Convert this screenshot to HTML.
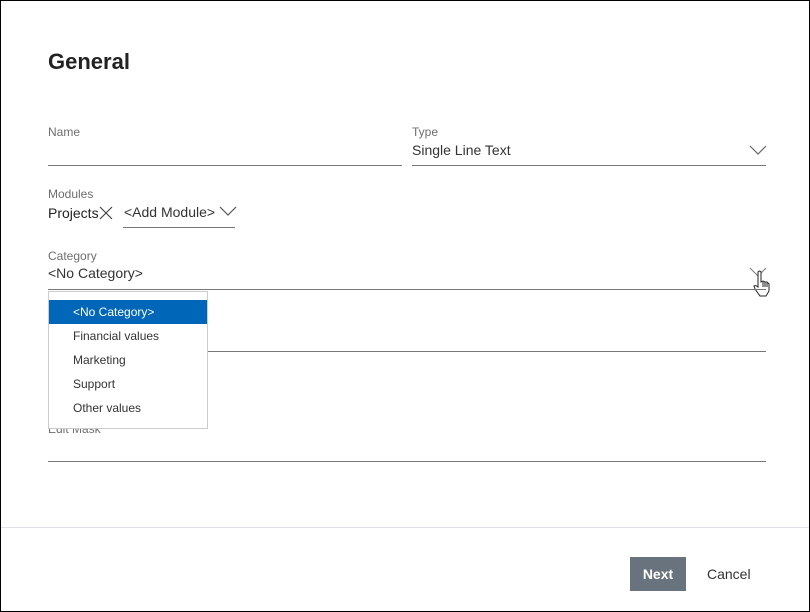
<!DOCTYPE html>
<html><head><style>
*{margin:0;padding:0;box-sizing:border-box}
body{width:810px;height:612px;background:#fff;font-family:"Liberation Sans",sans-serif;position:relative;overflow:hidden}
.frame{position:absolute;left:0;top:0;width:810px;height:612px;border:1px solid #000}
.a{position:absolute;white-space:nowrap}
.lbl{font-size:12px;color:#6e6e6e}
.val{font-size:14px;color:#333}
.line{position:absolute;height:1px;background:#777}
.dd{position:absolute;left:48px;top:291px;width:160px;height:138px;border:1px solid #ccc;background:#fff}
.it{position:absolute;left:24px;font-size:12px;color:#333}
</style></head><body>
<div class="frame"></div>
<div class="a" style="left:48px;top:49px;font-size:22px;font-weight:bold;color:#222">General</div>

<div class="a lbl" style="left:48px;top:125px">Name</div>
<div class="line" style="left:48px;top:165px;width:354px"></div>

<div class="a lbl" style="left:412px;top:125px">Type</div>
<div class="a val" style="left:412px;top:142px">Single Line Text</div>
<svg class="a" style="left:749px;top:144px" width="18" height="12"><path d="M1 2 L9 10 L17 2" fill="none" stroke="#666" stroke-width="1.2"/></svg>
<div class="line" style="left:412px;top:165px;width:354px"></div>

<div class="a lbl" style="left:48px;top:187px">Modules</div>
<div class="a val" style="left:48px;top:205px;color:#222">Projects</div>
<svg class="a" style="left:99px;top:206px" width="14" height="14"><path d="M1 1 L13 13 M13 1 L1 13" stroke="#444" stroke-width="1.2"/></svg>
<div class="a val" style="left:124px;top:204px">&lt;Add Module&gt;</div>
<svg class="a" style="left:219px;top:205px" width="18" height="12"><path d="M1 2 L9 10 L17 2" fill="none" stroke="#555" stroke-width="1.2"/></svg>
<div class="line" style="left:123px;top:227px;width:112px"></div>

<div class="a lbl" style="left:48px;top:249px">Category</div>
<div class="a val" style="left:48px;top:265px">&lt;No Category&gt;</div>
<svg class="a" style="left:749px;top:266px" width="18" height="12"><path d="M1 2 L9 10 L17 2" fill="none" stroke="#888" stroke-width="1.2"/></svg>
<svg class="a" style="left:752px;top:270px" width="20" height="28"><path d="M6 2 Q8 0 9 2 L9 12 L11 11 L13 12 L15 12 L17 14 L17 21 L14 26 L8 26 L3 19 L2 16 Q4 15 6 17 Z" fill="#fff" stroke="#222" stroke-width="1"/><path d="M11 12 L11 17 M13 12 L13 17 M15 13 L15 17" stroke="#222" stroke-width="1"/></svg>
<div class="line" style="left:48px;top:289px;width:718px"></div>

<div class="line" style="left:48px;top:351px;width:718px"></div>
<div class="a lbl" style="left:48px;top:422px">Edit Mask</div>
<div class="line" style="left:48px;top:461px;width:718px"></div>

<div class="dd">
<div style="position:absolute;left:0;top:8px;width:158px;height:24px;background:#0067b8"></div>
<div class="it" style="top:13px;color:#fff">&lt;No Category&gt;</div>
<div class="it" style="top:37px">Financial values</div>
<div class="it" style="top:61px">Marketing</div>
<div class="it" style="top:85px">Support</div>
<div class="it" style="top:109px">Other values</div>
</div>

<div class="a" style="left:1px;top:527px;width:808px;height:1px;background:#e1dfe8"></div>
<div class="a" style="left:630px;top:557px;width:56px;height:34px;background:#69737d;color:#fff;font-size:14px;font-weight:bold;text-align:center;line-height:34px">Next</div>
<div class="a" style="left:707px;top:566px;font-size:14px;color:#333">Cancel</div>
</body></html>
